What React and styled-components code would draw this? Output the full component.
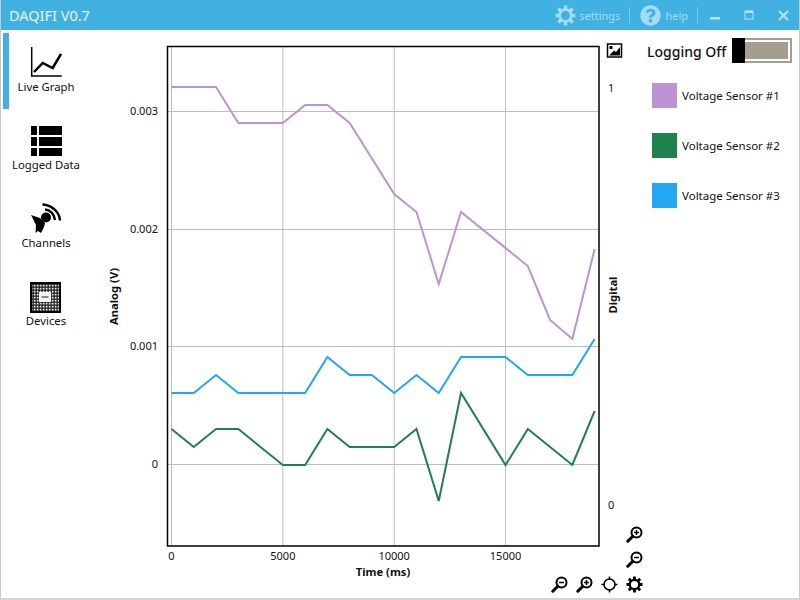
import React from 'react'
import styled, { createGlobalStyle } from 'styled-components'
import { FaQuestionCircle } from 'react-icons/fa'

const FONT = `"Noto Sans", "Open Sans", "Liberation Sans", sans-serif`

const GlobalStyle = createGlobalStyle`
    html, body {
        margin: 0;
        padding: 0;
        background: #ffffff;
    }
`

const Window = styled.div`
    width: 800px;
    height: 600px;
    box-sizing: border-box;
    border-left: 1px solid #c9c9c9;
    border-right: 1px solid #c9c9c9;
    border-bottom: 2px solid #d4d4d4;
    display: flex;
    flex-direction: column;
    font-family: ${FONT};
    color: #111111;
    overflow: hidden;
`

const TitleBar = styled.header`
    height: 30px;
    margin: 0 -1px;
    flex: none;
    background: #41b1e1;
    display: flex;
    align-items: center;
    padding-left: 9px;
`

const AppName = styled.div`
    color: #e6f4fb;
    font-size: 14.5px;
    flex: 1;
`

const TitleAction = styled.div`
    display: flex;
    align-items: center;
    gap: ${(p) => p.$gap}px;
    color: #a6dcf3;
    font-size: 11px;
`

const Divider = styled.span`
    width: 1px;
    height: 16px;
    background: #7fcbec;
    margin: 0 ${(p) => p.$right}px 0 9px;
`

const WindowButton = styled.button`
    width: 34px;
    height: 30px;
    padding: 0;
    border: none;
    background: transparent;
    display: flex;
    align-items: center;
    justify-content: center;
    color: #b7e1f4;
`

const Body = styled.div`
    flex: 1;
    display: flex;
    min-height: 0;
`

const Sidebar = styled.nav`
    width: 99px;
    flex: none;
    padding: 3px 0 0 2px;
    box-sizing: border-box;
    display: flex;
    flex-direction: column;
    gap: 2px;
`

const NavItem = styled.div`
    width: 80px;
    height: 76px;
    flex: none;
    box-sizing: border-box;
    border-left: 6px solid ${(p) => (p.$active ? '#41b1e1' : 'transparent')};
    padding-top: 14px;
    display: flex;
    flex-direction: column;
    align-items: center;
`

const NavLabel = styled.span`
    font-size: 11.3px;
    line-height: 16px;
    white-space: nowrap;
`

const ChartPanel = styled.section`
    position: relative;
    width: 545px;
    height: 568px;
    flex: none;
`

const ChartSvg = styled.svg`
    display: block;
    font-family: ${FONT};
`

const ChartTools = styled.div`
    position: absolute;
    right: -2px;
    bottom: 1px;
    display: grid;
    grid-template-columns: repeat(4, 25px);
    grid-auto-rows: 25px;
    place-items: center;
`

const ToolIcon = styled.svg`
    display: block;
    grid-column: ${(p) => p.$col};
`

const LegendPanel = styled.aside`
    flex: 1;
    padding: 8px 0 0 2px;
    display: flex;
    flex-direction: column;
`

const LoggingRow = styled.div`
    display: flex;
    align-items: center;
    height: 25px;
    margin-bottom: 20px;
`

const LoggingLabel = styled.span`
    width: 85px;
    padding-top: 1px;
    font-size: 14px;
    font-weight: 500;
    white-space: nowrap;
`

const Toggle = styled.div`
    position: relative;
    width: 60px;
    height: 25px;
    box-sizing: border-box;
    border: 2px solid #a59d90;
    padding: 2px;

    &::before {
        content: '';
        display: block;
        height: 100%;
        background: #a59d90;
    }
`

const ToggleThumb = styled.span`
    position: absolute;
    left: -2px;
    top: -2px;
    bottom: -2px;
    width: 13px;
    background: #000000;
`

const LegendRow = styled.div`
    display: flex;
    align-items: center;
    height: 25px;
    margin: 0 0 25px 5px;
    gap: 5px;
`

const Swatch = styled.span`
    width: 25px;
    height: 25px;
    background: ${(p) => p.$color};
`

const LegendText = styled.span`
    font-size: 11.5px;
    white-space: nowrap;
`

const XPOS = (t) => 171.5 + t * 0.02227

const SERIES = [
    {
        name: 'Voltage Sensor #1',
        color: '#be93d4',
        points: [[0, 87], [2000, 87], [3000, 123], [5000, 123], [6000, 105], [7000, 105], [8000, 123], [10000, 194], [11000, 212], [12000, 284], [13000, 212], [16000, 266], [17000, 320], [18000, 339], [19000, 249]],
    },
    {
        name: 'Voltage Sensor #2',
        color: '#1e824c',
        points: [[0, 429], [1000, 447], [2000, 429], [3000, 429], [5000, 465], [6000, 465], [7000, 429], [8000, 447], [10000, 447], [11000, 429], [12000, 501], [13000, 393], [15000, 465], [16000, 429], [18000, 465], [19000, 411]],
    },
    {
        name: 'Voltage Sensor #3',
        color: '#22a7f0',
        points: [[0, 393], [1000, 393], [2000, 375], [3000, 393], [6000, 393], [7000, 357], [8000, 375], [9000, 375], [10000, 393], [11000, 375], [12000, 393], [13000, 357], [15000, 357], [16000, 375], [18000, 375], [19000, 339]],
    },
]

const X_TICKS = [0, 5000, 10000, 15000]
const Y_TICKS = [['0.003', 111.5], ['0.002', 229.5], ['0.001', 346.5], ['0', 464.5]]

const LiveGraphIcon = () => (
    <svg width="32" height="32" viewBox="0 0 32 32" fill="none" stroke="#000">
        <path d="M1.7 0v29h30" strokeWidth="1.5" />
        <path d="M4 25l8.700-9 10 5L31 7" strokeWidth="2.5" />
    </svg>
)

const LoggedDataIcon = () => (
    <svg width="32" height="32" viewBox="0 0 32 32" fill="#000">
        <path d="M1 1h6v9H1zM9 1h23v9H9zM1 12h6v9H1zM9 12h23v9H9zM1 23h6v8H1zM9 23h23v8H9z" />
    </svg>
)

const ChannelsIcon = () => (
    <svg width="32" height="32" viewBox="0 0 32 32" fill="none" stroke="#000">
        <path d="M1 12L10 15 15 20 14 24 11 30 8 28 5.500 30 6 22z" fill="#000" stroke="none" />
        <circle cx="16" cy="14.500" r="5" fill="#000" stroke="none" />
        <path d="M15 6.500c5 .3 9.500 4.500 10 10.500M12.500 1.500c9 .3 17 7.500 17.500 16" strokeWidth="2.500" />
    </svg>
)

const DevicesIcon = () => (
    <svg width="32" height="32" viewBox="0 0 32 32">
        <defs>
            <pattern id="chipGrid" width="3" height="3" patternUnits="userSpaceOnUse">
                <rect width="3" height="3" fill="#222" />
                <rect x="0.8" y="0.8" width="1.700" height="1.700" fill="#eee" />
            </pattern>
        </defs>
        <rect x="0" y="1" width="31" height="31" fill="#000" />
        <rect x="2" y="3" width="27" height="27" fill="url(#chipGrid)" />
        <rect x="9" y="11" width="12" height="10" fill="#f4f4f4" />
        <rect x="11.500" y="15" width="7" height="2" fill="#8a8a8a" />
    </svg>
)

const NAV = [
    { label: 'Live Graph', icon: <LiveGraphIcon />, active: true },
    { label: 'Logged Data', icon: <LoggedDataIcon /> },
    { label: 'Channels', icon: <ChannelsIcon /> },
    { label: 'Devices', icon: <DevicesIcon /> },
]

const GEAR_TEETH = 'M8.500 0.500v3M8.500 13.500v3M0.500 8.500h3M13.500 8.500h3M2.800 2.800l2.200 2.200M12 12l2.200 2.200M14.200 2.800L12 5M5 12l-2.200 2.200'

// 타이틀바 설정 아이콘
const SettingsGear = () => (
    <svg width="21" height="21" viewBox="0 0 17 17" fill="none" stroke="currentColor">
        <circle cx="8.500" cy="8.500" r="4.700" strokeWidth="2.200" />
        <path d={GEAR_TEETH} strokeWidth="2.800" />
    </svg>
)

// 돋보기 아이콘: kind 가 plus 면 세로줄도 그림
const ZoomTool = ({ col, kind }) => (
    <ToolIcon $col={col} width="17" height="17" viewBox="0 0 17 17" fill="none" stroke="#000">
        <circle cx="10.500" cy="6.500" r="5" strokeWidth="2" />
        <path d="M6.800 10.200L1.800 15.200" strokeWidth="3" strokeLinecap="round" />
        <path d="M8 6.500h5" strokeWidth="1.500" />
        {kind === 'plus' && <path d="M10.500 4v5" strokeWidth="1.500" />}
    </ToolIcon>
)

const CenterTool = ({ col }) => (
    <ToolIcon $col={col} width="17" height="17" viewBox="0 0 17 17" fill="none" stroke="#000">
        <circle cx="8.500" cy="8.500" r="5.500" strokeWidth="1.500" />
        <path d="M8.500 0.500v3.500M8.500 13v3.500M0.500 8.500h3.500M13 8.500h3.500" strokeWidth="1.500" />
    </ToolIcon>
)

const GearTool = ({ col }) => (
    <ToolIcon $col={col} width="17" height="17" viewBox="0 0 17 17" fill="none" stroke="#000">
        <circle cx="8.500" cy="8.500" r="4.700" strokeWidth="2.200" />
        <path d={GEAR_TEETH} strokeWidth="2.800" />
    </ToolIcon>
)

const Chart = () => (
    <ChartSvg width="545" height="568" viewBox="100 30 545 568">
        {X_TICKS.map((t) => (
            <line key={t} x1={XPOS(t)} x2={XPOS(t)} y1="46" y2="546" stroke="#bdbdbd" />
        ))}
        {Y_TICKS.map(([label, y]) => (
            <line key={label} x1="168" x2="599" y1={y} y2={y} stroke="#bdbdbd" />
        ))}
        {SERIES.map((s) => (
            <polyline
                key={s.name}
                points={s.points.map(([t, y]) => `${XPOS(t)},${y}`).join(' ')}
                fill="none"
                stroke={s.color}
                strokeWidth="2"
            />
        ))}
        <rect x="167.500" y="46.500" width="431.500" height="499.500" fill="none" stroke="#000" strokeWidth="1.500" />
        <g fontSize="11" fill="#111">
            {X_TICKS.map((t) => (
                <text key={t} x={XPOS(t)} y="560" textAnchor="middle">{t}</text>
            ))}
            {Y_TICKS.map(([label, y]) => (
                <text key={label} x="158" y={y + 3.5} textAnchor="end">{label}</text>
            ))}
            <text x="608" y="92">1</text>
            <text x="608" y="509">0</text>
        </g>
        <g fontSize="11.200" fontWeight="700" fill="#111">
            <text x="383" y="576" textAnchor="middle">Time (ms)</text>
            <text transform="translate(118 296.500) rotate(-90)" textAnchor="middle">Analog (V)</text>
            <text transform="translate(617 295) rotate(-90)" textAnchor="middle">Digital</text>
        </g>
        <rect x="607.500" y="44" width="14" height="13" fill="#fff" stroke="#000" strokeWidth="1.500" />
        <path d="M609 55.500l5-5 2 1.500 4-5v8.500z" fill="#000" />
        <rect x="609.500" y="46" width="3" height="3" fill="#000" />
    </ChartSvg>
)

const App = () => {
    return (
        <Window>
            <GlobalStyle />
            <TitleBar>
                <AppName>DAQIFI V0.7</AppName>
                <TitleAction $gap={3}>
                    <SettingsGear />
                    <span>settings</span>
                </TitleAction>
                <Divider $right={10} />
                <TitleAction $gap={4}>
                    <FaQuestionCircle size={21} />
                    <span>help</span>
                </TitleAction>
                <Divider $right={0} />
                <WindowButton aria-label="minimize">
                    <svg width="10" height="10" viewBox="0 0 10 10"><rect y="7" width="10" height="2.500" fill="currentColor" /></svg>
                </WindowButton>
                <WindowButton aria-label="maximize">
                    <svg width="10" height="10" viewBox="0 0 10 10" fill="none" stroke="currentColor"><rect x="1" y="1" width="8" height="8" /><path d="M1 2h8" strokeWidth="2" /></svg>
                </WindowButton>
                <WindowButton aria-label="close">
                    <svg width="11" height="11" viewBox="0 0 11 11" stroke="currentColor" strokeWidth="2"><path d="M1 1l9 9M10 1l-9 9" /></svg>
                </WindowButton>
            </TitleBar>
            <Body>
                <Sidebar>
                    {NAV.map((item) => (
                        <NavItem key={item.label} $active={item.active}>
                            {item.icon}
                            <NavLabel>{item.label}</NavLabel>
                        </NavItem>
                    ))}
                </Sidebar>
                <ChartPanel>
                    <Chart />
                    <ChartTools>
                        <ZoomTool col={4} kind="plus" />
                        <ZoomTool col={4} kind="minus" />
                        <ZoomTool col={1} kind="minus" />
                        <ZoomTool col={2} kind="plus" />
                        <CenterTool col={3} />
                        <GearTool col={4} />
                    </ChartTools>
                </ChartPanel>
                <LegendPanel>
                    <LoggingRow>
                        <LoggingLabel>Logging Off</LoggingLabel>
                        <Toggle>
                            <ToggleThumb />
                        </Toggle>
                    </LoggingRow>
                    {SERIES.map((s) => (
                        <LegendRow key={s.name}>
                            <Swatch $color={s.color} />
                            <LegendText>{s.name}</LegendText>
                        </LegendRow>
                    ))}
                </LegendPanel>
            </Body>
        </Window>
    )
}

export default App
